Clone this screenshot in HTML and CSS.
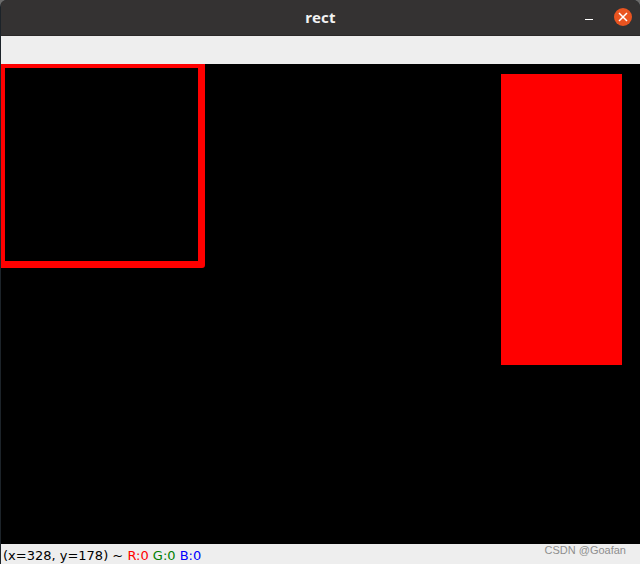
FILE: index.html
```html
<!DOCTYPE html>
<html lang="en">
<head>
<meta charset="UTF-8" />
<title>rect</title>
<link rel="stylesheet" href="styles.css">
</head>
<body>
<div class="window">
    <div class="titlebar">
        <span class="title">rect</span>
        <span class="minimize"></span>
        <span class="close">
            <svg width="18" height="18" viewBox="0 0 18 18">
                <path d="M5 5 L13 13 M13 5 L5 13" stroke="#fff" stroke-width="1.5" fill="none"/>
            </svg>
        </span>
    </div>
    <div class="toolbar"></div>
    <div class="canvas">
        <div class="rect-outline"></div>
        <div class="rect-filled"></div>
    </div>
    <div class="statusbar">
        <span>(x=328, y=178) ~ <span class="red">R:0</span> <span class="green">G:0</span> <span class="blue">B:0</span></span>
        <span class="watermark">CSDN @Goafan</span>
    </div>
</div>
</body>
</html>
```

FILE: styles.css
```css
* {
    box-sizing: border-box;
}
body {
    margin: 0;
    background-color: #6b6b6b;
}
.window {
    width: 640px;
    height: 564px;
    display: flex;
    flex-direction: column;
    overflow: hidden;
    padding-left: 1px;
    border-radius: 7px 7px 0 0;
    background-color: #1c2329;
}
.titlebar {
    position: relative;
    height: 36px;
    flex: none;
    display: flex;
    align-items: center;
    justify-content: center;
    padding-bottom: 2px;
    background-color: #343232;
    border-bottom: 1px solid #2a2828;
}
.title {
    font-family: "Noto Sans", sans-serif;
    font-weight: 700;
    font-size: 15px;
    letter-spacing: 0.2px;
    color: #f2f2f2;
}
.minimize {
    position: absolute;
    left: 584px;
    top: 19px;
    width: 8px;
    height: 1px;
    background-color: #fff;
}
.close {
    position: absolute;
    left: 613px;
    top: 8px;
    width: 18px;
    height: 18px;
    border-radius: 50%;
    background-color: #e95420;
    display: flex;
}
.toolbar {
    height: 28px;
    flex: none;
    background-color: #eeeeee;
}
.canvas {
    position: relative;
    height: 480px;
    flex: none;
    background-color: #000;
}
.rect-outline {
    position: absolute;
    left: 0;
    top: 0;
    width: 204px;
    height: 204px;
    border-style: solid;
    border-color: #f00;
    border-width: 4px 7px 7px 4px;
    border-bottom-right-radius: 3px;
}
.rect-filled {
    position: absolute;
    left: 500px;
    top: 10px;
    width: 121px;
    height: 291px;
    background-color: #f00;
}
.statusbar {
    position: relative;
    height: 20px;
    flex: none;
    padding-left: 2px;
    background-color: #eeeeee;
    font-family: "DejaVu Sans", sans-serif;
    font-size: 13px;
    line-height: 23px;
    color: #000;
    white-space: nowrap;
}
.red {
    color: #f00;
}
.green {
    color: #008000;
}
.blue {
    color: #00f;
}
.watermark {
    position: absolute;
    right: 14px;
    top: -5px;
    font-family: "Liberation Sans", sans-serif;
    font-size: 11px;
    color: #8f8f8f;
}
```
